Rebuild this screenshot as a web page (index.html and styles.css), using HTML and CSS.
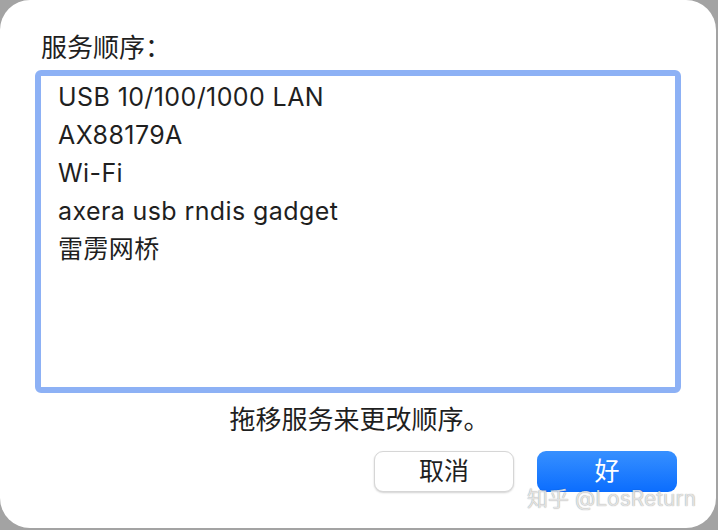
FILE: index.html
```html
<!DOCTYPE html>
<html lang="zh-CN">
<head>
<meta charset="utf-8">
<title>服务顺序</title>
<link rel="stylesheet" href="styles.css">
</head>
<body>
<div class="dialog">
  <div class="label">服务顺序：</div>
  <ul class="list">
    <li>USB 10/100/1000 LAN</li>
    <li>AX88179A</li>
    <li>Wi-Fi</li>
    <li>axera usb rndis gadget</li>
    <li>雷雳网桥</li>
  </ul>
  <div class="hint">拖移服务来更改顺序。</div>
  <div class="buttons">
    <button class="btn btn-cancel">取消</button>
    <button class="btn btn-ok">好</button>
  </div>
  <div class="watermark">知乎 @LosReturn</div>
</div>
</body>
</html>
```

FILE: styles.css
```css
html, body {
  margin: 0;
  padding: 0;
}
body {
  width: 718px;
  height: 530px;
  overflow: hidden;
  background: #a3a3a3;
  font-family: Inter, "Noto Sans CJK SC", sans-serif;
  color: #1f1f1f;
}
.dialog {
  position: relative;
  box-sizing: border-box;
  width: 716px;
  height: 528px;
  background: #ffffff;
  border-radius: 30px;
  padding: 35px 35px 0 35px;
  display: flex;
  flex-direction: column;
}
.label {
  font-size: 26px;
  line-height: 26px;
  height: 26px;
  padding-left: 6px;
}
.list {
  list-style: none;
  margin: 9px 0 0 0;
  padding: 2px 0 0 0;
  box-sizing: border-box;
  height: 323px;
  border: 6px solid #8db1f5;
  border-radius: 6px;
  background: #fff;
}
.list li {
  height: 38px;
  line-height: 38px;
  font-size: 25px;
  letter-spacing: 0.4px;
  padding-left: 17px;
}
.hint {
  margin-top: 14px;
  font-size: 26px;
  line-height: 26px;
  text-align: center;
  padding-left: 3px;
}
.buttons {
  margin-top: 18px;
  display: flex;
  justify-content: flex-end;
  gap: 23px;
  padding-right: 4px;
}
.btn {
  box-sizing: border-box;
  width: 140px;
  height: 41px;
  border-radius: 9px;
  font-family: Inter, "Noto Sans CJK SC", sans-serif;
  font-size: 25px;
  line-height: 1;
  padding: 0;
}
.btn-cancel {
  background: #ffffff;
  color: #1f1f1f;
  border: 1px solid #d6d6d6;
  box-shadow: 0 1px 2px rgba(0, 0, 0, 0.18);
}
.btn-ok {
  background: linear-gradient(#3790ff, #0b6dfe);
  color: #ffffff;
  border: none;
}
.watermark {
  position: absolute;
  left: 527px;
  top: 486px;
  font-size: 21px;
  line-height: 26px;
  color: rgba(240, 240, 240, 0.85);
  text-shadow: 0 0 1px rgba(0, 0, 0, 0.45);
  white-space: nowrap;
}
```
